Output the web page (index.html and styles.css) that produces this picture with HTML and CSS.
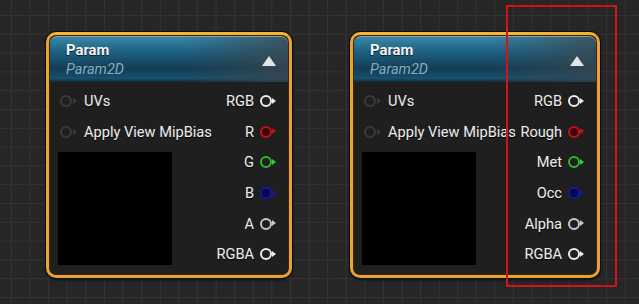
FILE: index.html
```html
<!DOCTYPE html>
<html lang="en">
<head>
  <meta charset="UTF-8"/>
  <title>Material Graph | Param2D</title>
  <link rel="stylesheet" href="styles.css">
</head>
<body>
  <div class="graph">

    <div class="node node-a">
      <div class="node-head">
        <div class="titles">
          <div class="title">Param</div>
          <div class="subtitle">Param2D</div>
        </div>
        <span class="collapse"></span>
      </div>
      <div class="node-body">
        <div class="inputs">
          <div class="pin-row"><span class="pin-in"></span>UVs</div>
          <div class="pin-row"><span class="pin-in"></span>Apply View MipBias</div>
          <div class="preview"></div>
        </div>
        <div class="outputs">
          <div class="pin-row">RGB<span class="pin-out white"></span></div>
          <div class="pin-row">R<span class="pin-out red"></span></div>
          <div class="pin-row">G<span class="pin-out green"></span></div>
          <div class="pin-row">B<span class="pin-out blue"></span></div>
          <div class="pin-row">A<span class="pin-out grey"></span></div>
          <div class="pin-row">RGBA<span class="pin-out white"></span></div>
        </div>
      </div>
    </div>

    <div class="node node-b">
      <div class="node-head">
        <div class="titles">
          <div class="title">Param</div>
          <div class="subtitle">Param2D</div>
        </div>
        <span class="collapse"></span>
      </div>
      <div class="node-body">
        <div class="inputs">
          <div class="pin-row"><span class="pin-in"></span>UVs</div>
          <div class="pin-row"><span class="pin-in"></span>Apply View MipBias</div>
          <div class="preview"></div>
        </div>
        <div class="outputs">
          <div class="pin-row">RGB<span class="pin-out white"></span></div>
          <div class="pin-row">Rough<span class="pin-out red"></span></div>
          <div class="pin-row">Met<span class="pin-out green"></span></div>
          <div class="pin-row">Occ<span class="pin-out blue"></span></div>
          <div class="pin-row">Alpha<span class="pin-out grey"></span></div>
          <div class="pin-row">RGBA<span class="pin-out white"></span></div>
        </div>
      </div>
    </div>

    <div class="highlight"></div>
  </div>
</body>
</html>
```

FILE: styles.css
```css
html,body{margin:0;padding:0;}
body{background:#262626;font-family:Roboto,"Liberation Sans",sans-serif;color:#e6e6e6;overflow:hidden;}
.graph{position:relative;width:639px;height:304px;
  background-color:#262626;
  background-image:
    linear-gradient(to right,#333 1px,transparent 1px),
    linear-gradient(to bottom,#333 1px,transparent 1px);
  background-size:18.6px 18.8px;
  background-position:11px 15px;}

/* nodes sit on the free canvas */
.node{position:absolute;top:32px;box-sizing:border-box;
  border:3px solid #e9a235;border-radius:10px;
  border-top-color:#f1b434;
  box-shadow:0 0 0 1px #0c0c0c,inset 0 0 0 1px #3a2606,0 2px 3px rgba(0,0,0,.6);
  background:#1e1e1e;padding:1px;}
.node-a{left:46px;width:246px;}
.node-b{left:350px;width:250px;}

.node-head{height:45px;display:flex;align-items:center;justify-content:space-between;
  padding:0 12px 0 16px;border-radius:7px 7px 0 0;
  border-top:1px solid #86a2ae;
  background:
    linear-gradient(to right,rgba(60,70,76,0) 55%,rgba(60,70,76,.75) 100%),
    linear-gradient(to bottom,#3a86a8 0%,#1f6485 30%,#123d55 70%,#17506e 92%,#0e2a3a 100%);}
.titles{display:flex;flex-direction:column;margin-top:1px;}
.title{font-weight:bold;font-size:14.8px;line-height:19px;color:#f2f2f2;text-shadow:0 1px 1px rgba(0,0,0,.7);}
.subtitle{font-style:italic;font-size:14.5px;line-height:19px;color:#86aabb;}
.collapse{width:0;height:0;border-left:7px solid transparent;border-right:7px solid transparent;
  border-bottom:10px solid #e4e4e4;margin-top:2px;}

.node-body{display:flex;justify-content:space-between;padding:4px 11px 4px 8px;
  background:#1f1f1f;border-radius:0 0 7px 7px;}
.inputs,.outputs{display:flex;flex-direction:column;}
.outputs{align-items:flex-end;}
.pin-row{height:30.6px;display:flex;align-items:center;font-size:14.6px;white-space:nowrap;
  color:#ececec;text-shadow:0 1px 1px #000,0 0 1px rgba(255,255,255,.25);}
.preview{width:114px;height:113px;background:#000;margin-top:5px;}

.pin-in{width:8px;height:8px;border:2px solid #3a3a3a;border-radius:50%;margin:0 12px 0 2px;position:relative;}
.pin-in::after{content:"";position:absolute;left:11px;top:1px;border-left:4px solid #3a3a3a;
  border-top:3px solid transparent;border-bottom:3px solid transparent;}

.pin-out{width:8px;height:8px;border:2.5px solid #ddd;border-radius:50%;margin:0 5px 0 6px;position:relative;}
.pin-out::after{content:"";position:absolute;left:10px;top:0.5px;border-left:4px solid #ddd;
  border-top:3.5px solid transparent;border-bottom:3.5px solid transparent;}
.pin-out.white{border-color:#ececec;}
.pin-out.white::after{border-left-color:#ececec;}
.pin-out.grey{border-color:#c8c8c8;}
.pin-out.grey::after{border-left-color:#c8c8c8;}
.pin-out.red{border-color:#c4111b;background:#3a0508;}
.pin-out.red::after{border-left-color:#c4111b;}
.pin-out.green{border-color:#2fb82a;}
.pin-out.green::after{border-left-color:#3ad035;}
.pin-out.blue{border-color:#1414a8;background:#07074a;}
.pin-out.blue::after{border-left-color:#1414a8;}

/* annotation box drawn over the graph */
.highlight{position:absolute;left:506px;top:5px;width:107px;height:278px;border:2px solid #d01418;}
```
